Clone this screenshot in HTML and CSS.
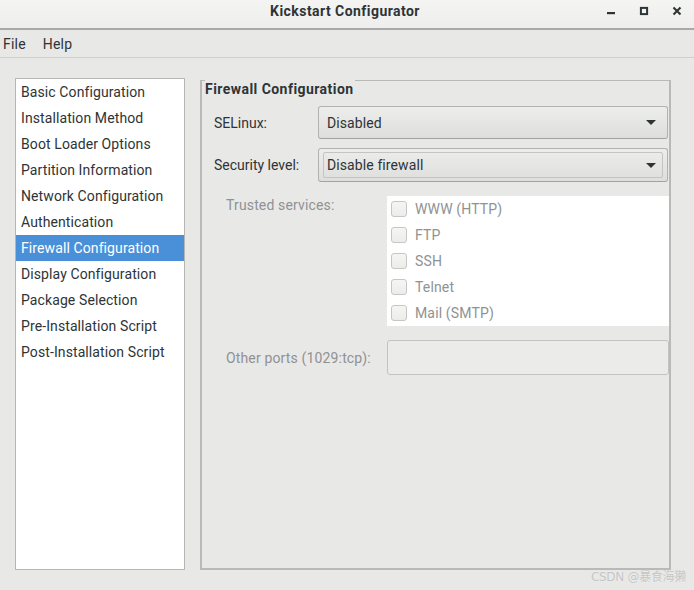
FILE: index.html
```html
<!DOCTYPE html>
<html lang="en">
<head>
<meta charset="utf-8">
<title>Kickstart Configurator</title>
<link rel="stylesheet" href="styles.css">
</head>
<body>
<div class="window">
  <header class="titlebar">
    <div class="title">Kickstart Configurator</div>
    <div class="controls">
      <svg class="ctl" width="10" height="10" viewBox="0 0 10 10"><rect x="1" y="6" width="8" height="2.2" fill="#2e3436"/></svg>
      <svg class="ctl" width="10" height="10" viewBox="0 0 10 10"><rect x="1.9" y="1.9" width="6.2" height="6.2" fill="none" stroke="#2e3436" stroke-width="2"/></svg>
      <svg class="ctl" width="10" height="10" viewBox="0 0 10 10"><path d="M1.5 1.5 L8.5 8.5 M8.5 1.5 L1.5 8.5" stroke="#2e3436" stroke-width="2.1"/></svg>
    </div>
  </header>
  <nav class="menubar">
    <span class="menu-item">File</span>
    <span class="menu-item">Help</span>
  </nav>
  <main class="content">
    <ul class="sidebar">
      <li>Basic Configuration</li>
      <li>Installation Method</li>
      <li>Boot Loader Options</li>
      <li>Partition Information</li>
      <li>Network Configuration</li>
      <li>Authentication</li>
      <li class="selected">Firewall Configuration</li>
      <li>Display Configuration</li>
      <li>Package Selection</li>
      <li>Pre-Installation Script</li>
      <li>Post-Installation Script</li>
    </ul>
    <section class="frame">
      <div class="frame-head"><span class="frame-title">Firewall Configuration</span></div>
      <div class="frame-body">
        <div class="row row-selinux">
          <span class="label">SELinux:</span>
          <div class="combo">
            <span class="combo-text">Disabled</span>
            <span class="arrow"></span>
          </div>
        </div>
        <div class="row row-security">
          <span class="label">Security level:</span>
          <div class="combo combo-focus">
            <div class="focus-ring">
              <span class="combo-text">Disable firewall</span>
              <span class="arrow"></span>
            </div>
          </div>
        </div>
        <div class="row row-services">
          <span class="label dim">Trusted services:</span>
          <ul class="services">
            <li><span class="check"></span>WWW (HTTP)</li>
            <li><span class="check"></span>FTP</li>
            <li><span class="check"></span>SSH</li>
            <li><span class="check"></span>Telnet</li>
            <li><span class="check"></span>Mail (SMTP)</li>
          </ul>
        </div>
        <div class="row row-ports">
          <span class="label dim">Other ports (1029:tcp):</span>
          <div class="entry"></div>
        </div>
      </div>
    </section>
  </main>
  <div class="watermark">CSDN @暴食海獭</div>
</div>
</body>
</html>
```
FILE: styles.css
```css
* { box-sizing: border-box; }
html, body {
  margin: 0;
  padding: 0;
}
body {
  width: 694px;
  height: 590px;
  overflow: hidden;
  background: #e8e8e7;
  font-family: Roboto, "Noto Sans", "DejaVu Sans", sans-serif;
  font-size: 14px;
  color: #2e3436;
}
.window {
  position: relative;
  width: 694px;
  height: 590px;
}
.titlebar {
  height: 30px;
  background: linear-gradient(#f4f4f3, #eeeeed);
  border-bottom: 2px solid #a9a9a7;
  display: flex;
  align-items: flex-start;
  justify-content: center;
  position: relative;
}
.title {
  font-weight: bold;
  font-size: 14px;
  letter-spacing: 0.45px;
  line-height: 23px;
  color: #2e3436;
  margin-left: -4px;
}
.controls {
  position: absolute;
  right: 12px;
  top: 6px;
  display: flex;
  gap: 23px;
}
.ctl { display: block; }
.menubar {
  height: 28px;
  border-bottom: 1px solid #cfcfcd;
  display: flex;
  align-items: center;
  padding-left: 3px;
  gap: 17px;
}
.menu-item {
  line-height: 28px;
  letter-spacing: 0.2px;
}
.content {
  display: flex;
  align-items: flex-start;
  padding: 20px 0 0 15px;
}
.sidebar {
  list-style: none;
  margin: 0;
  padding: 0;
  width: 170px;
  height: 492px;
  background: #fff;
  border: 1px solid #b6b6b3;
}
.sidebar li {
  height: 26px;
  line-height: 26px;
  padding-left: 5px;
  white-space: nowrap;
  letter-spacing: 0.1px;
}
.sidebar li.selected {
  background: #4a90d9;
  color: #fff;
}
.frame {
  margin-left: 15px;
  margin-top: 2px;
  width: 471px;
  height: 490px;
  border: 2px solid #b9b9b7;
  border-top: none;
}
.frame-head {
  display: flex;
  height: 18px;
  margin: 0 -2px;
}
.frame-head::before {
  content: "";
  width: 5px;
  border-top: 1px solid #b9b9b7;
}
.frame-head::after {
  content: "";
  flex: 1;
  border-top: 1px solid #b9b9b7;
}
.frame-title {
  font-weight: bold;
  letter-spacing: 0.45px;
  line-height: 18px;
  padding: 0 1px 0 0;
}
.frame-body {
  padding: 0 0 0 12px;
}
.row {
  display: flex;
  align-items: center;
}
.row-selinux { margin-top: 8px; }
.row-security { margin-top: 9px; }
.label {
  width: 104px;
  flex: none;
  white-space: nowrap;
}
.combo {
  width: 350px;
  height: 33px;
  border: 1px solid #b2b2b0;
  border-bottom-color: #a2a2a0;
  border-radius: 3px;
  background: linear-gradient(#ededec, #dededd);
  display: flex;
  align-items: center;
  padding: 0 11px 0 8px;
}
.combo-focus {
  height: 34px;
  padding: 3px 4px;
}
.focus-ring {
  flex: 1;
  height: 100%;
  border: 1px solid #c4c4c2;
  border-radius: 2px;
  display: flex;
  align-items: center;
  padding: 0 6px 0 3px;
}
.combo-text {
  flex: 1;
  letter-spacing: 0.1px;
}
.arrow {
  width: 0;
  height: 0;
  border-left: 5px solid transparent;
  border-right: 5px solid transparent;
  border-top: 5px solid #2e3436;
}
.row-services {
  margin-top: 14px;
  align-items: flex-start;
  padding-left: 12px;
}
.row-ports {
  margin-top: 14px;
  padding-left: 12px;
}
.dim {
  color: #8f9293;
  width: 161px;
  line-height: 18px;
  letter-spacing: 0.15px;
}
.services {
  list-style: none;
  margin: 0;
  padding: 0 0 0 4px;
  width: 282px;
  height: 130px;
  background: #fff;
}
.services li {
  height: 26px;
  display: flex;
  align-items: center;
  color: #8f9293;
  letter-spacing: 0.15px;
}
.check {
  width: 16px;
  height: 16px;
  border: 1px solid #c6c6c4;
  border-radius: 3px;
  background: linear-gradient(#f5f5f4, #ececeb);
  margin-right: 8px;
}
.entry {
  width: 282px;
  height: 35px;
  border: 1px solid #c3c3c1;
  border-radius: 3px;
  background: #ebebea;
}
.watermark {
  position: absolute;
  right: 8px;
  bottom: 6px;
  font-size: 12px;
  color: #c4c4c4;
  font-family: "DejaVu Sans", "Noto Sans CJK SC", sans-serif;
  text-shadow: 0 0 1px #fafafa;
  letter-spacing: -0.3px;
}
```
